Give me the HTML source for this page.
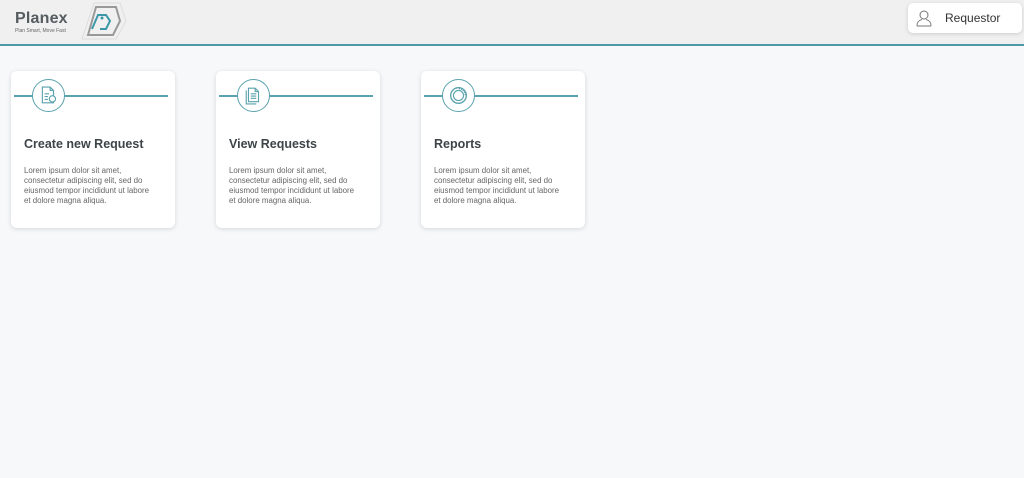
<!DOCTYPE html>
<html><head><style>
*{margin:0;padding:0;box-sizing:border-box}
body{width:1024px;height:478px;background:#f7f8fa;font-family:"Liberation Sans",sans-serif;position:relative;overflow:hidden}
.hdr{position:absolute;left:0;top:0;width:1024px;height:46px;background:#f0f0f0;border-bottom:2px solid #4f9aa6}
.logo{position:absolute;left:15px;top:10px;font-size:16px;font-weight:bold;color:#555c5f;letter-spacing:.2px}
.tag{position:absolute;left:15px;top:28px;font-size:5px;color:#666}
.user{position:absolute;left:908px;top:3px;width:114px;height:30px;background:#fff;border-radius:5px;box-shadow:0 1px 4px rgba(0,0,0,.15)}
.user span{position:absolute;left:37px;top:8px;font-size:12px;color:#333}
.card{position:absolute;top:71px;width:164px;height:157px;background:#fff;border-radius:6px;box-shadow:0 1px 5px rgba(0,0,0,.14)}
.line{position:absolute;left:3px;top:24px;width:154px;height:1.5px;background:#5aa2ad}
.circ{position:absolute;left:21px;top:8px;width:33px;height:33px;border:1.5px solid #5aa2ad;border-radius:50%;background:#fff}
.circ svg{position:absolute;left:6px;top:6px}
.t{position:absolute;left:13px;top:66px;font-size:12.5px;font-weight:bold;color:#3d4448}
.d{position:absolute;left:13px;top:95px;width:150px;font-size:7.9px;line-height:10px;color:#666;white-space:nowrap}
</style></head><body>
<div class="hdr">
<div class="logo">Planex</div>
<div class="tag">Plan Smart, Move Fast</div>
<svg style="position:absolute;left:76px;top:1px" width="52" height="40" viewBox="0 0 52 40">
<polygon points="18,2 44,2 50,20 40,38 6,38 12,20" fill="none" stroke="#ddd" stroke-width="1"/>
<polygon points="20,6 40,6 44,20 37,34 12,34 16,20" fill="none" stroke="#999" stroke-width="2"/>
<path d="M16,28 L22,14 L30,14 L34,20 L30,28 L24,28" fill="none" stroke="#3b98a8" stroke-width="2"/>
<circle cx="26" cy="17" r="1.5" fill="#3b98a8"/>
</svg>
<div class="user">
<svg style="position:absolute;left:8px;top:6px" width="16" height="18" viewBox="0 0 16 18"><circle cx="8" cy="6" r="4" fill="none" stroke="#777" stroke-width="1"/><path d="M1,17 C1,12 4,11 6,10.5 M15,17 C15,12 12,11 10,10.5 M1,17 H15" fill="none" stroke="#777" stroke-width="1"/></svg>
<span>Requestor</span></div>
</div>

<div class="card" style="left:11px"><div class="line"></div><div class="circ">
<svg width="19" height="19" viewBox="0 0 17 17"><path d="M3,1 H10 L13,4 V15 H3 Z M10,1 V4 H13 M5,7 H9 M5,9.5 H8 M5,12 H8" fill="none" stroke="#5aa2ad" stroke-width="1"/><circle cx="12" cy="11.5" r="2.8" fill="#fff" stroke="#5aa2ad"/></svg></div>
<div class="t">Create new Request</div>
<div class="d">Lorem ipsum dolor sit amet,<br>consectetur adipiscing elit, sed do<br>eiusmod tempor incididunt ut labore<br>et dolore magna aliqua.</div></div>

<div class="card" style="left:216px"><div class="line"></div><div class="circ">
<svg width="19" height="19" viewBox="0 0 17 17"><path d="M2,4 V16 H11 M4,2 V14 H13 V5 L10,2 Z M10,2 V5 H13 M6,7 H11 M6,9 H11 M6,11 H11" fill="none" stroke="#5aa2ad" stroke-width="1"/></svg></div>
<div class="t">View Requests</div>
<div class="d">Lorem ipsum dolor sit amet,<br>consectetur adipiscing elit, sed do<br>eiusmod tempor incididunt ut labore<br>et dolore magna aliqua.</div></div>

<div class="card" style="left:421px"><div class="line"></div><div class="circ">
<svg width="19" height="19" viewBox="0 0 17 17"><circle cx="8.5" cy="8.5" r="7" fill="none" stroke="#5aa2ad" stroke-width="1.2"/><circle cx="8.5" cy="8.5" r="4.5" fill="none" stroke="#5aa2ad" stroke-width="1"/><path d="M9,2 A6.5,6.5 0 0 1 15,9" fill="none" stroke="#5aa2ad" stroke-width="2" stroke-dasharray="1 1"/></svg></div>
<div class="t">Reports</div>
<div class="d">Lorem ipsum dolor sit amet,<br>consectetur adipiscing elit, sed do<br>eiusmod tempor incididunt ut labore<br>et dolore magna aliqua.</div></div>
</body></html>
